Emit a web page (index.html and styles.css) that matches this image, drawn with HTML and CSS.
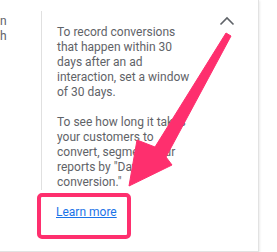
FILE: index.html
```html
<!DOCTYPE html>
<html>
<head>
<meta charset="utf-8">
<link rel="stylesheet" href="styles.css">
</head>
<body>
<div class="page">
  <div class="card">
    <div class="left">
      <div>n</div>
      <div>h</div>
    </div>
    <div class="panel">
      <div class="panel-body">
        <div class="text">
          <p>To record conversions<br>that happen within 30<br>days after an ad<br>interaction, set a window<br>of 30 days.</p>
          <p>To see how long it takes<br>your customers to<br>convert, segment your<br>reports by "Days to<br>conversion."</p>
        </div>
        <div class="toggle">
          <svg width="16" height="10" viewBox="0 0 16 10"><path d="M1.5 8.5 L8 2 L14.5 8.5" fill="none" stroke="#5f6368" stroke-width="1.6"/></svg>
        </div>
      </div>
      <div class="panel-foot"><a href="#">Learn more</a></div>
    </div>
  </div>
  <svg class="annot" width="277" height="252" viewBox="0 0 277 252">
    <rect x="39" y="195" width="90" height="42" rx="3" fill="none" stroke="#fe2f6e" stroke-width="4"/>
    <path d="M226 33 L231 36 L166 157 L172 165 L129 186 L137 140 L155 147 Z" fill="#fe2f6e" stroke="#fe2f6e" stroke-width="1" stroke-linejoin="round"/>
  </svg>
</div>
</body>
</html>
```
FILE: styles.css
```css
* { box-sizing: border-box; }
html, body { margin: 0; padding: 0; background: #fff; }
body { font-family: Roboto, "Liberation Sans", Arial, sans-serif; }
.page {
  position: relative;
  width: 277px;
  height: 252px;
  overflow: hidden;
  background: #fff;
}
.card {
  display: flex;
  width: 259px;
  height: 252px;
  padding-top: 11px;
  background: #fff;
  border-right: 1px solid #e2e2e2;
  border-bottom: 1px solid #e2e2e2;
  box-shadow: 1px 1px 2px rgba(0,0,0,0.08);
}
.left {
  width: 41px;
  flex: none;
  padding-top: 3px;
  font-size: 12px;
  line-height: 15px;
  color: #5f6368;
}
.panel {
  display: flex;
  flex-direction: column;
}
.panel-body {
  display: flex;
  border-left: 1px solid #e0e0e0;
  padding: 5px 0 0 15px;
}
.text {
  width: 162px;
  padding-top: 9px;
  font-size: 12px;
  line-height: 15px;
  color: #5f6368;
}
.text p { margin: 0 0 15px 0; }
.text p:last-child { margin-bottom: 0; }
.toggle {
  line-height: 0;
}
.panel-foot {
  padding: 15px 0 0 15px;
  font-size: 12px;
  line-height: 15px;
}
.panel-foot a { color: #1a73e8; text-decoration: underline; }
.annot {
  position: absolute;
  left: 0;
  top: 0;
}
```
